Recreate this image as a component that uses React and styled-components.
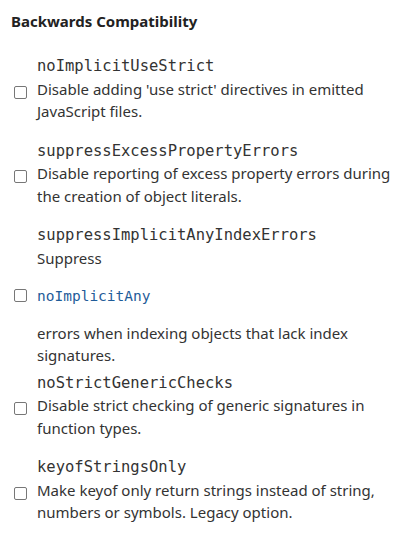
import React from 'react'
import styled, { createGlobalStyle } from 'styled-components'

const GlobalStyle = createGlobalStyle`
	body {
		margin: 0;
		background: #fff;
		font-family: 'Noto Sans', 'Open Sans', sans-serif;
		color: #333;
	}
`

const options = [
	{
		name: 'noImplicitUseStrict',
		desc: "Disable adding 'use strict' directives in emitted JavaScript files.",
	},
	{
		name: 'suppressExcessPropertyErrors',
		desc: 'Disable reporting of excess property errors during the creation of object literals.',
	},
]

const lastOptions = [
	{
		name: 'noStrictGenericChecks',
		desc: 'Disable strict checking of generic signatures in function types.',
	},
	{
		name: 'keyofStringsOnly',
		desc: 'Make keyof only return strings instead of string, numbers or symbols. Legacy option.',
	},
]

const App = () => {
	return (
		<>
			<GlobalStyle />
			<Wrapper>
				<Title>Backwards Compatibility</Title>
				{options.map((o) => (
					<Option key={o.name}>
						<Name>{o.name}</Name>
						<Box />
						<Desc>{o.desc}</Desc>
					</Option>
				))}
				<Option $tight>
					<Name>suppressImplicitAnyIndexErrors</Name>
					<Desc>Suppress</Desc>
					<Box $inline />
					<Name $link $inline>
						noImplicitAny
					</Name>
					<Desc $after>
						errors when indexing objects that lack index signatures.
					</Desc>
				</Option>
				{lastOptions.map((o) => (
					<Option key={o.name}>
						<Name>{o.name}</Name>
						<Box />
						<Desc>{o.desc}</Desc>
					</Option>
				))}
			</Wrapper>
		</>
	)
}

const Wrapper = styled.div`
	width: 410px;
	padding: 10px 14px 0 11px;
	box-sizing: border-box;
`

const Title = styled.h4`
	margin: 0 0 23px;
	font-size: 15px;
	font-weight: 700;
	line-height: 22px;
	color: #222;
`

const Option = styled.div`
	display: grid;
	grid-template-columns: 13px 1fr;
	column-gap: 10px;
	padding-left: 3px;
	margin-bottom: ${(p) => (p.$tight ? '5px' : '17px')};
`

const Name = styled.code`
	grid-column: 2;
	font-family: 'DejaVu Sans Mono', monospace;
	font-size: ${(p) => (p.$link ? '14.5px' : '15.5px')};
	line-height: 22.5px;
	color: ${(p) => (p.$link ? '#1f5c99' : '#333')};
	margin-top: ${(p) => (p.$inline ? '16px' : '0')};
`

const Box = styled.span`
	grid-column: 1;
	width: 13px;
	height: 13px;
	box-sizing: border-box;
	border: 1px solid #777;
	border-radius: 2px;
	margin-top: ${(p) => (p.$inline ? '20px' : '8px')};
	align-self: start;
`

const Desc = styled.p`
	grid-column: 2;
	margin: ${(p) => (p.$after ? '14px 0 0' : '0')};
	font-size: 15px;
	line-height: 22.5px;
`

export default App
